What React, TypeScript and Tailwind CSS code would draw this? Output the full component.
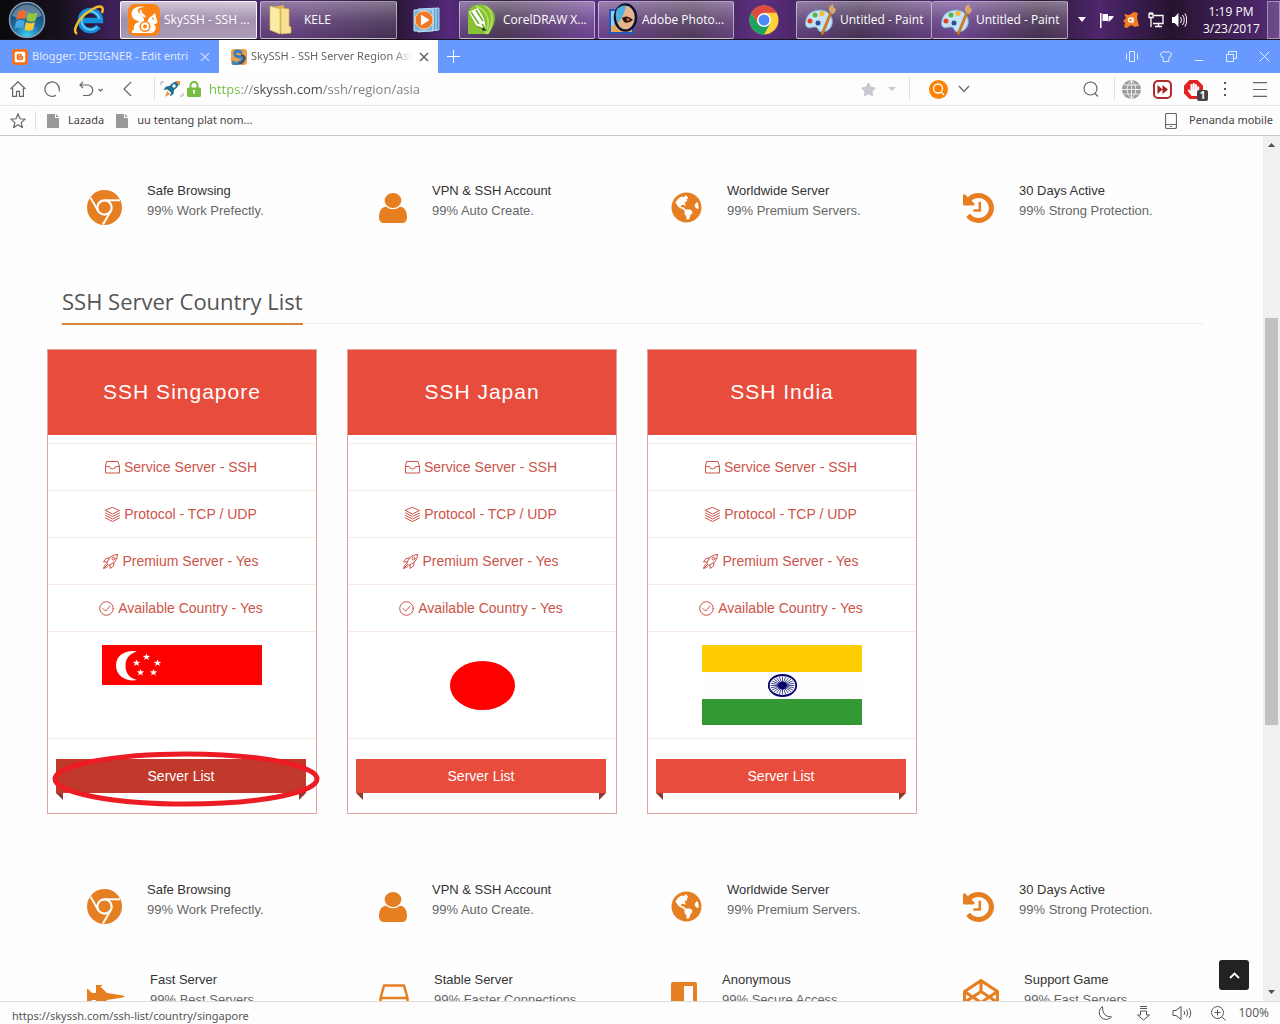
import React from "react";
import { FaCodepen, FaGlobeAmericas, FaStar, FaBlogger, FaHandPaper } from "react-icons/fa";

type Feature = { title: string; text: string; icon: React.ReactNode };

const BrowserIcon = () => (
  <svg width="35" height="35" viewBox="0 0 35 35" fill="none">
    <circle cx="17.500" cy="17.500" r="17.500" fill="currentColor" />
    <circle cx="17.500" cy="17.500" r="7.200" stroke="#fefefe" strokeWidth="2.200" />
    {[0, 120, 240].map((a) => (
      <path key={a} d="M17.500 10.300H33" transform={`rotate(${a} 17.5 17.5)`} stroke="#fefefe" strokeWidth="2" />
    ))}
  </svg>
);

const UserIcon = () => (
  <svg width="28" height="30" viewBox="256 128 1280 1536" preserveAspectRatio="none" fill="currentColor">
    <path d="M1536 1399q0 109-62.5 187t-150.5 78h-854q-88 0-150.5-78t-62.5-187q0-85 8.5-160.5t31.5-152 58.5-131 94-89 134.5-34.5q131 128 313 128t313-128q76 0 134.5 34.5t94 89 58.5 131 31.5 152 8.5 160.5zm-256-887q0 159-112.5 271.5t-271.5 112.5-271.5-112.5-112.5-271.5 112.5-271.5 271.5-112.5 271.5 112.5 112.5 271.5z" />
  </svg>
);

const HistoryIcon = () => (
  <svg width="31" height="30" viewBox="128 128 1536 1536" preserveAspectRatio="none" fill="currentColor">
    <path d="M1664 896q0 156-61 298t-164 245-245 164-298 61q-172 0-327-72.5t-264-204.5q-7-10-6.5-22.5t8.5-20.5l137-138q10-9 25-9 16 2 23 12 73 95 179 147t225 52q104 0 198.5-40.5t163.5-109.5 109.5-163.5 40.5-198.5-40.5-198.5-109.5-163.5-163.5-109.5-198.5-40.5q-98 0-188 35.5t-160 101.5l137 138q31 30 14 69-17 40-59 40h-448q-26 0-45-19t-19-45v-448q0-42 40-59 39-17 69 14l130 129q107-101 244.5-156.5t284.5-55.5q156 0 298 61t245 164 164 245 61 298zm-640-288v448q0 14-9 23t-23 9h-320q-14 0-23-9t-9-23v-64q0-14 9-23t23-9h224v-352q0-14 9-23t23-9h64q14 0 23 9t9 23z" />
  </svg>
);

const JetIcon = () => (
  <svg width="38" height="23" viewBox="0 0 38 23" fill="currentColor">
    <path d="M9 0h6v1.200h-2L20 8l8 1.300q8 1 10 2.200-2 1.200-10 2.200L20 15l-7 6.800h2V23H9v-8H5l-4 4H0V4h1l4 4h4V1.200z" />
  </svg>
);

const DriveIcon = () => (
  <svg width="30" height="26" viewBox="0 0 30 26" fill="none" stroke="currentColor" strokeWidth="2.500" strokeLinejoin="round">
    <path d="M1.500 14 5 1.500h20L28.500 14v9q0 2-2 2h-23q-2 0-2-2zM1.500 14h27" />
  </svg>
);

const ColumnsIcon = () => (
  <svg width="26" height="30" viewBox="0 0 26 30" fill="currentColor" fillRule="evenodd">
    <path d="M2 0h22q2 0 2 2v26q0 2-2 2H2q-2 0-2-2V2q0-2 2-2zM13 4h9v21h-9z" />
  </svg>
);

const primary: Feature[] = [
  { title: "Safe Browsing", text: "99% Work Prefectly.", icon: <BrowserIcon /> },
  { title: "VPN & SSH Account", text: "99% Auto Create.", icon: <UserIcon /> },
  { title: "Worldwide Server", text: "99% Premium Servers.", icon: <FaGlobeAmericas size={31} /> },
  { title: "30 Days Active", text: "99% Strong Protection.", icon: <HistoryIcon /> },
];

const secondary: Feature[] = [
  { title: "Fast Server", text: "99% Best Servers.", icon: <JetIcon /> },
  { title: "Stable Server", text: "99% Faster Connections.", icon: <DriveIcon /> },
  { title: "Anonymous", text: "99% Secure Access.", icon: <ColumnsIcon /> },
  { title: "Support Game", text: "99% Fast Servers.", icon: <FaCodepen size={36} /> },
];

function Features({ items }: { items: Feature[] }) {
  return (
    <ul className="grid grid-cols-4 pl-[87px] pr-2">
      {items.map((f) => (
        <li key={f.title} className="flex h-10 items-start gap-[25px]">
          <span className="flex h-[53px] shrink-0 items-center text-[#e67e22]">{f.icon}</span>
          <div className="text-[13px] leading-5 whitespace-nowrap">
            <h3 className="text-[#333]">{f.title}</h3>
            <p className="text-[#666]">{f.text}</p>
          </div>
        </li>
      ))}
    </ul>
  );
}

const line = { fill: "none", stroke: "currentColor", strokeWidth: 1, strokeLinejoin: "round" as const, strokeLinecap: "round" as const };

const InboxIcon = () => (
  <svg width="15" height="15" viewBox="0 0 15 15" {...line}>
    <path d="M2 1.500h11l1.500 5v6.500H.5V6.500zM.5 6.500h4q.3 2.500 3 2.500t3-2.500h4" />
  </svg>
);
const LayersIcon = () => (
  <svg width="15" height="15" viewBox="0 0 15 15" {...line}>
    <path d="M7.500.5l7 3-7 3.500-7-3.500zM.5 6l7 3.500 7-3.500M.5 8.500l7 3.500 7-3.500M.5 11l7 3.500 7-3.500" />
  </svg>
);
const RocketIcon = () => (
  <svg width="15" height="15" viewBox="0 0 15 15" {...line}>
    <path d="M14.500.5q-5 0-7.500 3L3.500 9l2.500 2.500L11.500 8q3-2.500 3-7.500zM6.500 4 3 4.500.500 8l3.500 0M11 8.500l-.5 3.500L7 14.500V11M3 10q-2 1-2.500 4.500Q4 14 5 12M1.500 13.500 4.500 10.500" />
    <circle cx="10.500" cy="4.500" r="1.500" />
  </svg>
);
const CheckIcon = () => (
  <svg width="15" height="15" viewBox="0 0 15 15" {...line}>
    <circle cx="7.500" cy="7.500" r="6.800" />
    <path d="M4 7.500l2.700 2.700L11 5.200" />
  </svg>
);

const starPath = (cx: number, cy: number, rx: number, ry: number) =>
  Array.from({ length: 10 }, (_, i) => {
    const k = i % 2 ? 0.4 : 1;
    const a = (i * Math.PI) / 5 - Math.PI / 2;
    return `${cx + Math.cos(a) * rx * k},${cy + Math.sin(a) * ry * k}`;
  }).join(" ");

const Singapore = () => (
  <svg width="160" height="40" viewBox="0 0 160 40" role="img" aria-label="Flag of Singapore">
    <path d="M0 0h160v40H0z" fill="#f00" />
    <path d="M35 6.500C26 4.500 14 9 14 20.500S26 37 35 35C27 33 23.500 28 23.500 20.500S28 8.500 35 6.500z" fill="#fff" />
    {[[44.5, 12], [34.5, 18], [55.5, 18], [38.5, 27.5], [51.5, 27.5]].map(([x, y]) => (
      <polygon key={`${x}-${y}`} points={starPath(x, y, 4, 3.6)} fill="#fff" />
    ))}
  </svg>
);
const Japan = () => (
  <svg width="160" height="80" viewBox="0 0 160 80" role="img" aria-label="Flag of Japan">
    <ellipse cx="80.500" cy="40.500" rx="32.500" ry="24.500" fill="#f00" />
  </svg>
);
const India = () => (
  <svg width="160" height="80" viewBox="0 0 160 80" role="img" aria-label="Flag of India">
    <path d="M0 0h160v27H0z" fill="#fc0" />
    <path d="M0 27h160v27H0z" fill="#fdfdff" />
    <path d="M0 54h160v26H0z" fill="#393" />
    <g stroke="#006" fill="none">
      <ellipse cx="80.500" cy="40.500" rx="13.700" ry="10.500" strokeWidth="1.800" />
      {Array.from({ length: 12 }, (_, i) => {
        const a = (i * Math.PI) / 12;
        const x = Math.cos(a) * 12;
        const y = Math.sin(a) * 9;
        return <path key={i} d={`M${80.5 - x} ${40.5 - y}L${80.5 + x} ${40.5 + y}`} strokeWidth="0.7" />;
      })}
      <ellipse cx="80.500" cy="40.500" rx="4" ry="3.500" fill="#006" />
    </g>
  </svg>
);

const specs = [
  { label: "Service Server - SSH", icon: <InboxIcon /> },
  { label: "Protocol - TCP / UDP", icon: <LayersIcon /> },
  { label: "Premium Server - Yes", icon: <RocketIcon /> },
  { label: "Available Country - Yes", icon: <CheckIcon /> },
];

function Card({ name, flag, active }: { name: string; flag: React.ReactNode; active?: boolean }) {
  return (
    <article className="relative border border-[#e0a39c] bg-white">
      <h2 className="flex h-[85px] items-center justify-center bg-[#e74c3c] pb-0.5 text-[21px] tracking-[1px] text-white">{name}</h2>
      <ul className="mt-2 border-t border-[#f8e9e8] text-[14px] text-[#cc5449]">
        {specs.map((s) => (
          <li key={s.label} className="flex h-[47px] items-center justify-center gap-1 border-b border-[#f8e9e8] pr-0.5">
            {s.icon}
            {s.label}
          </li>
        ))}
        <li className="flex h-[107px] items-center justify-center border-b border-[#f8e9e8]">{flag}</li>
      </ul>
      <div className="pt-5 pr-[10px] pb-5 pl-2">
        <a href="#server-list" className={`relative flex h-[34px] items-center justify-center text-[14px] text-white ${active ? "bg-[#c0392b]" : "bg-[#e74c3c]"}`}>
          Server List
          <span className="absolute top-full left-0 h-[7px] w-[7px] bg-[#8f3a31] [clip-path:polygon(0_0,100%_0,100%_100%)]" />
          <span className="absolute top-full right-0 h-[7px] w-[7px] bg-[#8f3a31] [clip-path:polygon(0_0,100%_0,0_100%)]" />
        </a>
      </div>
      {active && (
        <svg className="pointer-events-none absolute bottom-0 left-1 overflow-visible" width="268" height="68" viewBox="0 0 268 68">
          <ellipse cx="134" cy="34" rx="131" ry="25" fill="none" stroke="#ed1c24" strokeWidth="5" />
        </svg>
      )}
    </article>
  );
}

/* ---- Windows taskbar ---- */

const StartOrb = () => (
  <svg width="38" height="38" viewBox="0 0 38 38">
    <defs>
      <radialGradient id="orb" cx=".5" cy=".95" r=".9"><stop offset="0" stopColor="#3fd0f4" /><stop offset=".45" stopColor="#1d6fa5" /><stop offset="1" stopColor="#173a5c" /></radialGradient>
    </defs>
    <circle cx="19" cy="19" r="17.500" fill="url(#orb)" stroke="#7f9db2" strokeWidth="1.500" />
    <path d="M4 15a15.500 15.500 0 0 1 30 0q-15 5-30 0z" fill="#fff" opacity=".3" />
    <path d="M10 11q4-3 8.500-.5l-1.500 8q-4-2-9 .5z" fill="#ee6b32" />
    <path d="M20 11.500q4 2.500 9.500 0l-2 8q-4 2.500-9 0z" fill="#92c83e" />
    <path d="M8 20.500q4-3 8.500-.5L15 27.500q-4-2-8.500.5z" fill="#4aa8e0" />
    <path d="M18 21q4 2.500 9 0L25 28.500q-4 2.500-8.500 0z" fill="#fdc92f" />
  </svg>
);
const IeIcon = () => (
  <svg width="32" height="32" viewBox="0 0 32 32" fill="none">
    <path d="M25.500 22.500a10 10 0 1 1 2-6H10" stroke="#1591db" strokeWidth="5.500" />
    <path d="M24 23a9 9 0 1 1 2.500-8" stroke="#72d3fb" strokeWidth="1.500" />
    <path d="M4 30C-1 27 5 15 15 8S32 0 29 9" stroke="#f4bd23" strokeWidth="2.500" />
  </svg>
);
const UcIcon = () => (
  <svg width="32" height="32" viewBox="0 0 32 32">
    <rect width="32" height="32" rx="7" fill="#fb8315" />
    <path d="M17 3C8 1 2 6 4 12c1 4 5 4 7 6-4 1-6 4-5 8H4v3h20c4-2 5-6 2-9 3 0 4-2 3-4l-1-3-1-4-3 3c-3 1-4 3-4 5l-4 1c1-4-2-7-5-9-3-3 0-6 6-6z" fill="#fff" />
    <circle cx="17" cy="22.500" r="5.500" fill="#fb8315" />
    <circle cx="17" cy="22.500" r="4" fill="#fff" />
    <circle cx="17" cy="22.500" r="2" fill="#fb8315" />
    <path d="M13 6c-2 3 2 4 4 7" fill="none" stroke="#fff" strokeWidth="2" />
    <circle cx="25" cy="14.500" r=".9" fill="#fb8315" />
  </svg>
);
const FolderIcon = () => (
  <svg width="24" height="31" viewBox="0 0 24 31">
    <path d="M3 3 15 1v27l-5 1z" fill="#d9b24f" />
    <path d="M12 4l8 1v17l2 1v6l-10 1z" fill="#f7e293" stroke="#d7b24e" strokeWidth=".7" />
    <path d="M1 2l10 3v25L1 26z" fill="#fbeba6" stroke="#dcb958" strokeWidth=".7" />
  </svg>
);
const MediaIcon = () => (
  <svg width="27" height="26" viewBox="0 0 27 26">
    <path d="M5 2l21-1v22l-21 2z" fill="#5c9fcf" stroke="#b4dbf2" />
    <path d="M20 1v23M23 1v23" stroke="#c6e5f6" />
    <path d="M1 3h19v21H1z" fill="#76b3db" stroke="#c6e5f6" />
    <circle cx="11" cy="13" r="9" fill="#ef7622" stroke="#ffd2a6" />
    <path d="M8 7.500v11l8.500-5.500z" fill="#fff" />
  </svg>
);
const CorelIcon = () => (
  <svg width="30" height="32" viewBox="0 0 30 32">
    <path d="M1 8C4-1 20-3 27 9c3 8-2 15-5 21H1z" fill="#86c232" />
    <path d="M18 2c9 6 9 18 2 28M9 2c13 5 15 18 9 28" fill="none" stroke="#b7e36c" strokeWidth="1.500" />
    <path d="M2 8l9-4 6 11 2 11-10-5z" fill="#fff" />
    <path d="M4 8l8 12M9 6l7 11M15 20l4 6-8-3" stroke="#6cab27" strokeWidth="1.500" fill="none" />
    <path d="M16 23l3 4-4-1z" fill="#222" />
  </svg>
);
const PhotoshopIcon = () => (
  <svg width="32" height="33" viewBox="0 0 32 33">
    <path d="M2 6h25v25H2z" fill="#2957b8" />
    <path d="M4 8h21v21H4z" fill="#8fd0ee" />
    <path d="M4 24q6-6 12-2t9-2v9H4z" fill="#e9a75d" />
    <ellipse cx="18.500" cy="14.500" rx="10.500" ry="13" fill="#e6b58c" stroke="#0a1430" strokeWidth="2.500" />
    <path d="M10 6q6-5 9-3-2 10-8 17-4-7-1-14z" fill="#4eb0dd" />
    <path d="M15 15q5-4 11 2-5 4-9 2z" fill="#2b1409" />
    <circle cx="21" cy="16.500" r="1.500" fill="#b87041" />
  </svg>
);
const ChromeColor = () => (
  <svg width="30" height="30" viewBox="0 0 30 30">
    <circle cx="15" cy="15" r="14.500" fill="#fdd13a" />
    <path d="M2.400 7.750A14.500 14.500 0 0 1 27.600 7.750H15L8.700 18.600z" fill="#dd4b3e" />
    <path d="M2.400 7.750A14.500 14.500 0 0 0 15 29.500L21.300 18.600 8.700 18.600z" fill="#1da261" />
    <circle cx="15" cy="15" r="7" fill="#fff" />
    <circle cx="15" cy="15" r="5.500" fill="#4c8bf5" />
  </svg>
);
const PaintIcon = () => (
  <svg width="32" height="32" viewBox="0 0 32 32">
    <path d="M3 13C7 5 22 3 27 12c4 8-1 16-9 16-5 0-3-5-7-5s-5 2-8 0-1-8 0-10z" fill="#c5e3f4" stroke="#6ea6cf" />
    <circle cx="6" cy="17" r="2.500" fill="#e0422f" />
    <circle cx="11" cy="11" r="2.500" fill="#53b548" />
    <circle cx="18" cy="9.500" r="2.500" fill="#f5b82e" />
    <circle cx="14" cy="19" r="2.500" fill="#2b4e95" />
    <path d="M26 8l2 1-9 22-2-1z" fill="#d97f24" stroke="#a65c17" strokeWidth=".5" />
    <path d="M25 7q-1-5 4-7 0 4 3 5-1 5-4 5z" fill="#d8a76e" />
  </svg>
);

function TaskButton({ icon, label, className }: { icon: React.ReactNode; label: string; className: string }) {
  return (
    <button className={`flex h-[38px] items-center overflow-hidden rounded-[2px] border border-white/50 text-[12px] whitespace-nowrap text-white ${className}`}>
      {icon}
      {label}
    </button>
  );
}

const glass = "bg-linear-to-b from-white/40 via-white/20 to-white/10";

function Taskbar() {
  return (
    <header className="flex h-10 shrink-0 items-center border-b border-[#1b1420] bg-[linear-gradient(90deg,#0b090c_0px,#16101c_60px,#3d2057_110px,#4c2768_300px,#2c173c_400px,#54297a_450px,#33203e_500px,#5b2c83_590px,#3b2348_690px,#5c2f80_760px,#301a40_860px,#5a2c80_960px,#2d1838_1040px,#4e266c_1100px,#26132f_1170px,#552b77_1280px)]">
      <button aria-label="Start" className="ml-2"><StartOrb /></button>
      <button aria-label="Internet Explorer" className="mr-[15px] ml-[27px]"><IeIcon /></button>
      <TaskButton icon={<UcIcon />} label="SkySSH - SSH ..." className="w-[137px] gap-1 border-white/90 bg-linear-to-b from-white/75 via-white/50 to-white/55 pl-[7px]" />
      <TaskButton icon={<FolderIcon />} label="KELE" className={`ml-[3px] w-[137px] gap-[11px] pl-2 ${glass}`} />
      <button aria-label="Media Player" className="mr-[19px] ml-4"><MediaIcon /></button>
      <TaskButton icon={<CorelIcon />} label="CorelDRAW X..." className={`w-[136px] gap-[6px] pl-[7px] ${glass}`} />
      <TaskButton icon={<PhotoshopIcon />} label="Adobe Photo..." className={`ml-[3px] w-[136px] gap-[3px] pl-2 ${glass}`} />
      <button aria-label="Chrome" className="mx-[15px]"><ChromeColor /></button>
      <TaskButton icon={<PaintIcon />} label="Untitled - Paint" className={`ml-0.5 w-[136px] gap-[4px] pl-[7px] ${glass}`} />
      <TaskButton icon={<PaintIcon />} label="Untitled - Paint" className={`w-[136px] gap-[4px] border-l-0 pl-[8px] ${glass}`} />
      <div className="ml-auto flex h-[38px] items-center text-white">
        <svg width="8" height="5" viewBox="0 0 8 5" fill="#fff"><path d="M0 0h8L4 5z" /></svg>
        <svg className="ml-[13px]" width="16" height="16" viewBox="0 0 16 16" fill="#fff"><path d="M1 1h1.500v15H1zM3.500 2H9v7H3.500zM9.500 4H15l-2 3-3.500 3z" /></svg>
        <svg className="ml-2" width="16" height="16" viewBox="0 0 16 16"><path d="M1 2l5 1 5-3 4 1-1 5 2 8-4 1-4-2-4 3-3-1 1-4-2-2 3-3z" fill="#f47b20" /><circle cx="7.500" cy="8" r="2" fill="none" stroke="#fff" strokeWidth="1.500" /><path d="M10 5.500V11" stroke="#fff" strokeWidth="1.300" /></svg>
        <svg className="ml-[9px]" width="16" height="16" viewBox="0 0 16 16" fill="none" stroke="#fff" strokeWidth="1.300"><path d="M6 3.500h9v8H5M7 14.500h7M10.500 12v2M1 2h4v3.500H1zM2 0v2M4 0v2M3 6v9" /></svg>
        <svg className="ml-[7px]" width="16" height="16" viewBox="0 0 16 16" fill="#fff"><path d="M1 5h2.500l4-4v14l-4-4H1z" /><path d="M9.500 5q2 3 0 6M11.500 3q3.500 5 0 10M14 1.500q3.500 6.500 0 13" fill="none" stroke="#fff" /></svg>
        <time className="ml-4 w-[56px] text-center text-[12px] leading-[17px]">1:19 PM<br />3/23/2017</time>
        <button aria-label="Show desktop" className="ml-2 h-[38px] w-[13px] border border-white/40 bg-white/15" />
      </div>
    </header>
  );
}

/* ---- Browser chrome ---- */

const stroke = { fill: "none", stroke: "currentColor", strokeWidth: 1.2 };

function Tabs() {
  return (
    <nav className="flex h-[33px] shrink-0 items-center bg-[#6899ff] font-['Noto_Sans',sans-serif] text-[11px] text-white">
      <div className="flex w-[219px] items-center pl-3">
        <span className="flex h-4 w-4 items-center justify-center rounded-[3px] bg-[#f5701b]"><FaBlogger size={12} /></span>
        <button className="ml-1 w-[164px] text-left whitespace-nowrap text-[#e0eaff]">Blogger: DESIGNER - Edit entri</button>
        <button aria-label="Close Blogger tab" className="ml-1 text-[#c3d6ff]"><svg width="10" height="10" viewBox="0 0 10 10" {...stroke}><path d="M1 1l8 8M9 1L1 9" /></svg></button>
      </div>
      <div className="flex h-full w-[219px] items-center bg-white pl-3 text-[#666]">
        <svg width="16" height="16" viewBox="0 0 16 16"><rect width="16" height="16" rx="3" fill="#eda04c" /><path d="M11 4Q5 0 4 4t6 4-1 5-6-1" fill="none" stroke="#347fc0" strokeWidth="3" /><path d="M10 6q5 1 3 5t-5 3" fill="none" stroke="#4b4f58" strokeWidth="2" /></svg>
        <button className="ml-1 w-[161px] overflow-hidden text-left whitespace-nowrap [mask-image:linear-gradient(90deg,#000_142px,transparent)]">SkySSH - SSH Server Region Asia</button>
        <button aria-label="Close SkySSH tab" className="ml-[7px]"><svg width="10" height="10" viewBox="0 0 10 10" {...stroke} strokeWidth="1.600"><path d="M1 1l8 8M9 1L1 9" /></svg></button>
      </div>
      <button aria-label="New tab" className="ml-[9px]"><svg width="13" height="13" viewBox="0 0 13 13" {...stroke} strokeWidth="1"><path d="M6.500 0v13M0 6.500h13" /></svg></button>
      <div className="mr-[10px] ml-auto flex items-center gap-[22px] text-[#e2ecff]">
        <button aria-label="Sidebar"><svg width="12" height="11" viewBox="0 0 12 11" {...stroke} strokeWidth="1"><path d="M3.500.5h5v10h-5zM.5 2.500v6M11.500 2.500v6" /></svg></button>
        <button aria-label="Themes"><svg width="12" height="11" viewBox="0 0 12 11" {...stroke} strokeWidth="1"><path d="M4 .5q2 2 4 0l3.500 2L10.500 6h-1.500v4.500H3V6H1.500l-1-3.500z" /></svg></button>
        <button aria-label="Minimize"><svg width="10" height="11" viewBox="0 0 10 11" {...stroke} strokeWidth="1"><path d="M1 9.500h8" /></svg></button>
        <button aria-label="Restore"><svg width="11" height="11" viewBox="0 0 11 11" {...stroke} strokeWidth="1"><path d="M.5 3.500h7v7h-7zM2.500 3V.5h8v7H8" /></svg></button>
        <button aria-label="Close"><svg width="11" height="11" viewBox="0 0 11 11" {...stroke} strokeWidth="1"><path d="M.5.5l10 10M10.500.5l-10 10" /></svg></button>
      </div>
    </nav>
  );
}

function Toolbar() {
  return (
    <div className="flex h-[33px] shrink-0 items-center border-b border-[#e6e6e6] bg-[#fdfdfd] text-[#666]">
      <button aria-label="Home" className="ml-[10px]"><svg width="16" height="16" viewBox="0 0 16 16" {...stroke}><path d="M.5 8 8 .8 15.500 8M2.600 7v8.400h3.900v-5h3v5h3.900V7" /></svg></button>
      <button aria-label="Reload" className="ml-[18px]"><svg width="17" height="16" viewBox="0 0 17 16" {...stroke}><path d="M12 14.200A7.200 7.200 0 1 1 15.300 8v2.500" /></svg></button>
      <button aria-label="Undo" className="ml-[18px]"><svg width="25" height="16" viewBox="0 0 25 16" {...stroke}><path d="M4 1 1 4l3 3M1 4h7.500a5 5 0 0 1 0 10.500H4M19.500 8l2 2 2-2" /></svg></button>
      <button aria-label="Back" className="ml-[18px]"><svg width="10" height="16" viewBox="0 0 10 16" {...stroke}><path d="M9 1 2 8l7 7" /></svg></button>
      <span className="ml-[22px] h-6 w-px bg-[#e2e2e2]" />
      <svg className="ml-[5px]" width="24" height="18" viewBox="0 0 24 18"><path d="M1 5V2h3M20 16h3v-3" fill="none" stroke="#aaa" /><path d="M19.500 1q-6 0-10 5L6 6.500 3.500 10l4-.5 3.500 3-1 4 3.500-2.500L14 10q5-3 5.500-9z" fill="#21718f" /><path d="M15 1h5v5zM7 11l3 3-5 3z" fill="#f08f34" /><circle cx="14" cy="6" r="1.700" fill="#fff" /></svg>
      <svg className="ml-[3px]" width="14" height="16" viewBox="0 0 14 16"><path d="M3.500 7V4.500a3.500 3.500 0 0 1 7 0V7" fill="none" stroke="#79bd45" strokeWidth="2" /><rect y="6.500" width="14" height="9.500" rx="1.500" fill="#79bd45" /><path d="M7 9v4M6 10h2" stroke="#fff" strokeWidth="1.300" /></svg>
      <input
        aria-label="Address"
        defaultValue="https://skyssh.com/ssh/region/asia"
        className="ml-2 min-w-0 flex-1 bg-[linear-gradient(90deg,#6cbb3c_31px,#888_31px,#888_45px,#444_45px,#444_113px,#7c7c7c_113px)] bg-clip-text pt-0.5 text-[13px] text-transparent outline-none"
      />
      <button aria-label="Bookmark page" className="text-[#c5c8d0]"><FaStar size={15} /></button>
      <svg className="ml-3 text-[#c5c8d0]" width="8" height="4" viewBox="0 0 8 4" fill="currentColor"><path d="M0 0h8L4 4z" /></svg>
      <span className="ml-[13px] h-6 w-px bg-[#e2e2e2]" />
      <button aria-label="Search engine" className="ml-[19px] flex items-center gap-[10px]">
        <svg width="19" height="19" viewBox="0 0 19 19"><circle cx="9.500" cy="9.500" r="9.500" fill="#f98305" /><circle cx="9" cy="8.500" r="4.500" fill="none" stroke="#fff" strokeWidth="1.300" /><path d="M12 12l3 3" stroke="#fff" strokeWidth="1.300" /></svg>
        <svg width="12" height="8" viewBox="0 0 12 8" {...stroke}><path d="M1 1l5 5.500L11 1" /></svg>
      </button>
      <input aria-label="Search" className="w-[113px] bg-transparent outline-none" />
      <button aria-label="Search the web"><svg width="16" height="16" viewBox="0 0 16 16" {...stroke}><circle cx="7.500" cy="7.500" r="6.500" /><path d="M12 12.500l3 3" /></svg></button>
      <span className="ml-[15px] h-6 w-px bg-[#e2e2e2]" />
      <button aria-label="Translate" className="ml-[7px]"><svg width="19" height="19" viewBox="0 0 19 19"><circle cx="9.500" cy="9.500" r="9.500" fill="#9b9b9b" /><path d="M0 9.500h19M9.500 0v19M2 5h15M2 14h15M9.500 0q-9 9.500 0 19M9.500 0q9 9.500 0 19" fill="none" stroke="#fff" strokeWidth=".8" /></svg></button>
      <button aria-label="Fast forward" className="ml-3"><svg width="19" height="19" viewBox="0 0 19 19"><rect x="1" y="1" width="17" height="17" rx="4" fill="#fff" stroke="#b02a2a" strokeWidth="2" /><path d="M4.500 5l5 4.500-5 4.500zM9.500 5l5.500 4.500L9.500 14z" fill="#a61f1f" /></svg></button>
      <button aria-label="Ad blocker" className="relative ml-3 flex h-[19px] w-6">
        <svg width="19" height="19" viewBox="0 0 19 19"><path d="M5.500 0h8L19 5.500v8L13.500 19h-8L0 13.500v-8z" fill="#e02424" /></svg>
        <FaHandPaper className="absolute top-[3px] left-[3px] text-white" size={13} />
        <span className="absolute right-0 -bottom-0.5 flex h-[11px] w-[11px] items-center justify-center rounded-[2px] bg-[#444] text-[10px] font-bold text-white">1</span>
      </button>
      <button aria-label="More" className="ml-[15px]"><svg width="4" height="15" viewBox="0 0 4 15" fill="#555"><path d="M1 0h2v2H1zM1 6h2v2H1zM1 12h2v2H1z" /></svg></button>
      <button aria-label="Menu" className="mr-[13px] ml-[26px]"><svg width="14" height="15" viewBox="0 0 14 15" {...stroke}><path d="M0 .6h14M0 7.500h14M0 14.400h14" /></svg></button>
    </div>
  );
}

const PageIcon = () => (
  <svg width="12" height="14" viewBox="0 0 12 14" fill="#999"><path d="M0 0h8v4h4v10H0zM9 0l3 3H9z" /></svg>
);

function Bookmarks() {
  return (
    <div className="flex h-[30px] shrink-0 items-center border-b border-[#c8c8c8] bg-[#fdfdfd] font-['Noto_Sans',sans-serif] text-[11px] text-[#4b3f3f]">
      <button aria-label="Bookmarks" className="ml-[10px] text-[#666]"><svg width="16" height="15" viewBox="0 0 16 15" {...stroke}><path d="M8 1l2 4.800 5 .4-3.800 3.400 1.200 5L8 11.800l-4.400 2.800 1.200-5L1 6.200l5-.4z" /></svg></button>
      <span className="ml-[9px] h-5 w-px bg-[#e2e2e2]" />
      <a href="#lazada" className="ml-[11px] flex items-center gap-[9px]"><PageIcon />Lazada</a>
      <a href="#uu" className="ml-3 flex items-center gap-[9px]"><PageIcon />uu tentang plat nom...</a>
      <a href="#mobile" className="mr-[7px] ml-auto flex items-center gap-3">
        <svg width="12" height="16" viewBox="0 0 12 16" {...stroke} stroke="#666"><rect x=".5" y=".5" width="11" height="15" rx="1.500" /><path d="M.5 11.500h11M5 13.500h2" /></svg>
        Penanda mobile
      </a>
    </div>
  );
}

function StatusBar() {
  return (
    <footer className="flex h-[23px] shrink-0 items-center border-t border-[#dcdcdc] bg-[#fdfdfd] text-[#555]">
      <span className="ml-3 pt-1.5 font-['Noto_Sans',sans-serif] text-[11px]">https://skyssh.com/ssh-list/country/singapore</span>
      <div className="mr-[11px] ml-auto flex items-center">
        <button aria-label="Night mode"><svg width="14" height="14" viewBox="0 0 14 14" {...stroke} strokeWidth="1"><path d="M4.500.5a7 7 0 1 0 9 10.500Q4 11 4.500.5z" /></svg></button>
        <button aria-label="Downloads" className="ml-[25px]"><svg width="13" height="15" viewBox="0 0 13 15" {...stroke} strokeWidth="1"><path d="M3 .5h7M3 2.500h7M3.500 5h6v4h3l-6 5-6-5h3z" /></svg></button>
        <button aria-label="Sound" className="ml-[22px]"><svg width="20" height="14" viewBox="0 0 20 14" {...stroke} strokeWidth="1"><path d="M1 4.500h3l5-4v13l-5-4H1zM12 5q1.500 2 0 4M14.500 3.500q2.500 3.500 0 7M17 2q3.500 5 0 10" /></svg></button>
        <button aria-label="Zoom" className="ml-[19px] flex items-center gap-3 text-[12px]"><svg width="15" height="15" viewBox="0 0 15 15" {...stroke} strokeWidth="1"><circle cx="6.500" cy="6.500" r="6" /><path d="M11 11l3.500 3.500M3.500 6.500h6M6.500 3.500v6" /></svg>100%</button>
      </div>
    </footer>
  );
}

export default function App() {
  return (
    <div className="flex h-screen flex-col overflow-hidden bg-[#fefefe] font-['Open_Sans','Noto_Sans',sans-serif]">
      <Taskbar />
      <Tabs />
      <Toolbar />
      <Bookmarks />
      <div className="relative flex min-h-0 flex-1">
        <main className="min-w-0 flex-1 overflow-hidden pt-[45px] font-['Liberation_Sans',Arial,sans-serif]">
          <Features items={primary} />
          <h1 className="mt-[58px] mr-[60px] ml-[62px] flex h-[45px] border-b border-dotted border-[#ddd] font-['Open_Sans',sans-serif] text-[22px] text-[#555]">
            <span className="h-[46px] border-b-2 border-[#d9823b] pt-[6px] leading-[32px] whitespace-nowrap">SSH Server Country List</span>
          </h1>
          <section className="mt-[25px] mr-[46px] mb-[66px] ml-[47px] grid grid-cols-4 gap-[30px]">
            <Card name="SSH Singapore" flag={<div className="flex h-20 items-start"><Singapore /></div>} active />
            <Card name="SSH Japan" flag={<Japan />} />
            <Card name="SSH India" flag={<India />} />
          </section>
          <Features items={primary} />
          <div className="h-[50px]" />
          <Features items={secondary} />
        </main>
        <button aria-label="Back to top" className="absolute right-[31px] bottom-[11px] flex h-[30px] w-[30px] items-center justify-center rounded-[3px] bg-[#222] text-white">
          <svg width="11" height="7" viewBox="0 0 11 7" fill="none" stroke="currentColor" strokeWidth="1.800"><path d="M1 6l4.500-4.500L10 6" /></svg>
        </button>
        <aside className="flex w-[17px] shrink-0 flex-col items-center bg-[#f0f0f0] text-[#505050]">
          <svg className="my-[7px] shrink-0" width="7" height="4" viewBox="0 0 7 4" fill="currentColor"><path d="M3.500 0 7 4H0z" /></svg>
          <span className="flex-[165]" />
          <span className="w-[13px] flex-[408] bg-[#c1c1c1]" />
          <span className="flex-[259]" />
          <svg className="my-[7px] shrink-0" width="7" height="4" viewBox="0 0 7 4" fill="currentColor"><path d="M0 0h7L3.500 4z" /></svg>
        </aside>
      </div>
      <StatusBar />
    </div>
  );
}
